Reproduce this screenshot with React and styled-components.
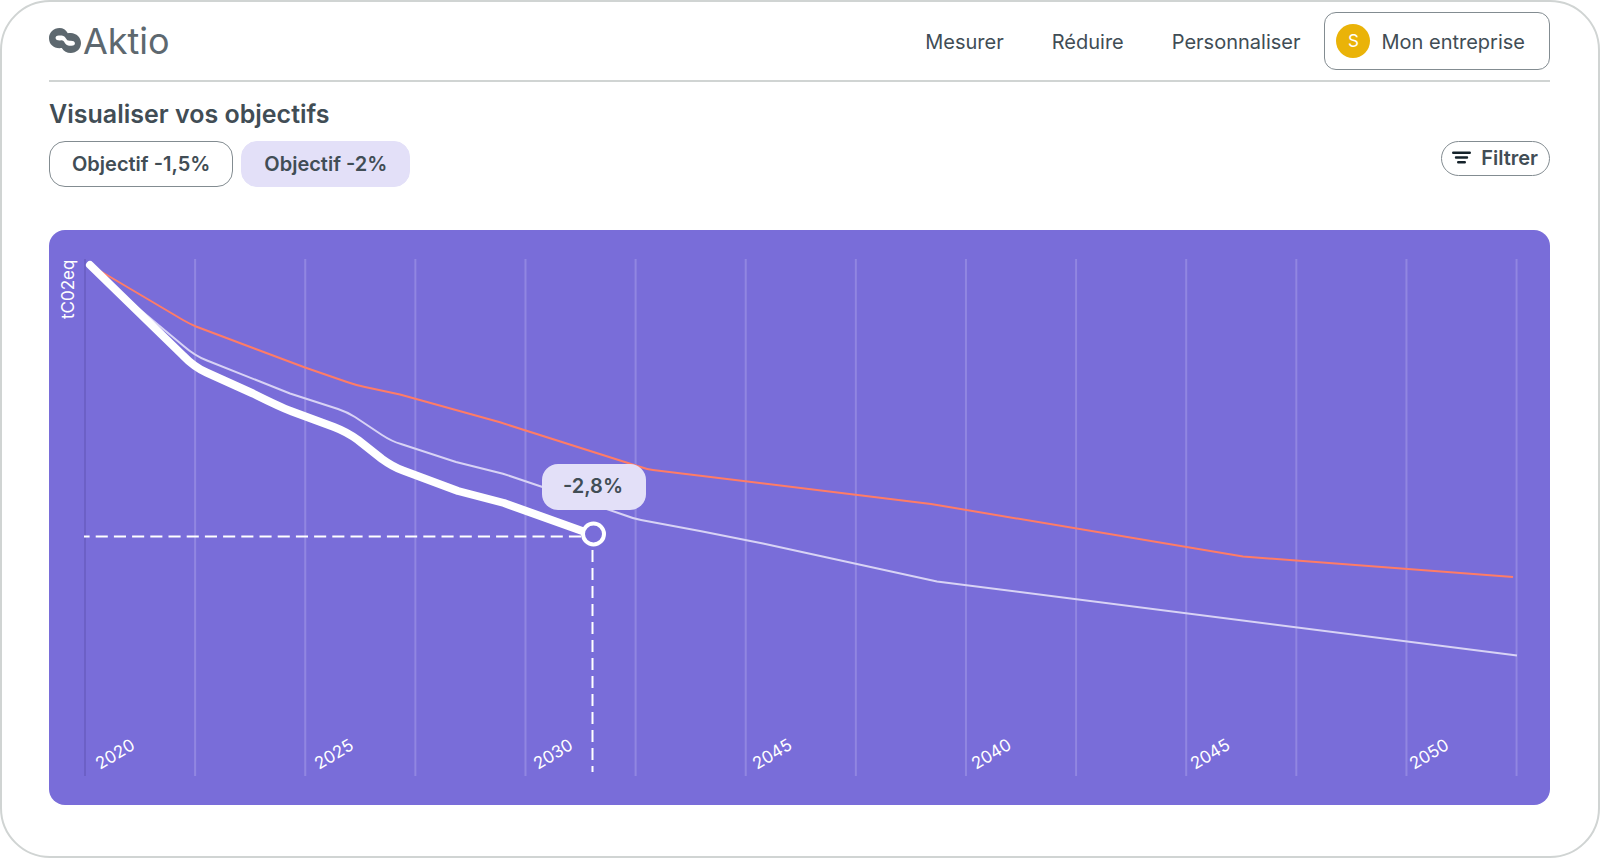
import React, { useState } from 'react';
import styled, { createGlobalStyle } from 'styled-components';

const GlobalStyle = createGlobalStyle`
  * {
    box-sizing: border-box;
  }

  body {
    margin: 0;
    background: #fff;
    color: #414d55;
    font-family: Inter, 'Liberation Sans', sans-serif;
  }

  button {
    font-family: inherit;
    color: inherit;
    cursor: pointer;
  }
`;

const Frame = styled.div`
  min-height: 100vh;
  padding: 10px 48px 51px 47px;
  border: 2px solid #d0d4d3;
  border-radius: 50px;
  background: #fff;
`;

const Header = styled.header`
  display: flex;
  align-items: center;
  justify-content: space-between;
  padding-bottom: 10px;
  border-bottom: 2px solid #d0d4d3;
`;

const Logo = styled.a`
  display: flex;
  align-items: center;
  gap: 2px;
  color: #5d686f;
  font-size: 36px;
  line-height: 42px;
  text-decoration: none;
`;

const Nav = styled.nav`
  display: flex;
  align-items: center;
  gap: 48px;
`;

const NavLink = styled.a`
  padding-top: 2px;
  font-size: 20px;
  line-height: 24px;
  color: inherit;
  text-decoration: none;
`;

const HeaderRight = styled.div`
  display: flex;
  align-items: center;
  gap: 24px;
`;

const CompanyButton = styled.button`
  display: flex;
  align-items: center;
  gap: 11px;
  height: 58px;
  padding: 0 24px 0 11px;
  border: 1px solid #838c91;
  border-radius: 12px;
  background: #fff;
  font-size: 20px;
  line-height: 24px;
`;

const CompanyName = styled.span`
  padding-top: 2px;
`;

const Avatar = styled.span`
  display: flex;
  align-items: center;
  justify-content: center;
  width: 34px;
  height: 34px;
  border-radius: 50%;
  background: #eab308;
  color: #fff;
  font-size: 17px;
`;

const Title = styled.h1`
  margin: 16px 0 10px;
  font-size: 25px;
  line-height: 33px;
  font-weight: 600;
`;

const Toolbar = styled.div`
  display: flex;
  align-items: flex-start;
  justify-content: space-between;
  margin-bottom: 43px;
`;

const Goals = styled.div`
  display: flex;
  gap: 8px;
`;

const GoalButton = styled.button`
  height: 46px;
  padding: 0 22px;
  border: 1px solid ${(props) => (props.$active ? '#e3e0f8' : '#838c91')};
  border-radius: 16px;
  background: ${(props) => (props.$active ? '#e3e0f8' : '#fff')};
  font-size: 20px;
  line-height: 24px;
  font-weight: 600;
`;

const FilterButton = styled.button`
  display: flex;
  align-items: center;
  gap: 10px;
  height: 35px;
  padding: 0 11px 2px 10px;
  border: 1px solid #838c91;
  border-radius: 18px;
  background: #fff;
  font-size: 20px;
  line-height: 24px;
  font-weight: 600;
`;

const ChartPanel = styled.section`
  overflow: hidden;
  border-radius: 16px;
  background: #796dd9;
`;

const Chart = styled.svg`
  display: block;
  width: 100%;
  height: auto;
`;

const AxisLabel = styled.text`
  fill: #fff;
  font-size: 17px;
`;

const BadgeText = styled.text`
  fill: #414d55;
  font-size: 20px;
  font-weight: 600;
`;

const goals = ['Objectif -1,5%', 'Objectif -2%'];
const years = ['2020', '2025', '2030', '2045', '2040', '2045', '2050'];
const gridLines = Array.from({ length: 14 }, (_, i) => 36 + i * 110.12);

function LogoMark() {
  return (
    <svg width="32" height="26" viewBox="0 0 32 26" aria-hidden="true">
      <path
        fill="#5d686f"
        fillRule="evenodd"
        d="M10.500 0C14 0 17 1.800 18.800 5.200C19.800 5 20.800 4.900 21.800 5C27.500 5.200 32 9.600 32 15C32 20.800 27.500 25 21.800 25C17.800 25 14.800 23.300 12.800 20C5 21 0 16.500 0 10.200C0 4.400 4.600 0 10.500 0ZM9.800 7.600C7.600 7.600 6.300 8.800 6.600 10.300C6.900 12 9 12.600 11.500 12.400C14.500 12.200 14.500 13.200 16 15.200C17.500 17.400 19.500 17.900 22.500 17.800C25 17.700 26.200 16.600 25.900 15C25.600 13.400 24 12.600 21.500 12.700C18.500 12.900 18 12 16.800 10.200C15.300 7.900 13.500 7.500 9.800 7.600Z"
      />
    </svg>
  );
}

function FilterIcon() {
  return (
    <svg width="19" height="13" viewBox="0 0 19 13" fill="none" stroke="#15222a" strokeWidth="2.4" strokeLinecap="round" aria-hidden="true">
      <path d="M1.200 1.700H17.800M4 6.500H15M6.200 11.300H12.800" />
    </svg>
  );
}

function ObjectiveChart() {
  return (
    <Chart viewBox="0 0 1501 575" role="img" aria-label="tC02eq">
      {gridLines.map((x, i) => (
        <line
          key={x}
          x1={x}
          x2={x}
          y1="29"
          y2="546"
          stroke={i === 0 ? '#6c60c6' : '#9186e1'}
          strokeWidth="2"
        />
      ))}

      <path
        d="M41 35L134 90Q141 94 147 96.500L256 137.500L298 152Q308 155.500 316 157L351 164.500L451 192.300L590 236.500Q597 239 604 240L882 274L1194 326.500L1464 347"
        fill="none"
        stroke="#ff7c66"
        strokeWidth="2"
      />
      <path
        d="M41 35L89 78L134 115.500Q146 126 158 130.500L241 163.500L289 179Q298 182 306 187L333 205Q343 211.500 352 214L407 232L454 243.700L492 256.500L578 286Q584 288.500 592 290L651 301L714 313.500L888 351.500L1468 425.500"
        fill="none"
        stroke="#d8d3f5"
        strokeWidth="2"
      />
      <path d="M532 306.500H35" stroke="#fff" strokeWidth="2" strokeDasharray="12.1 6.1" />
      <path d="M543.500 320V542" stroke="#fff" strokeWidth="2" strokeDasharray="12 6" />
      <path
        d="M41 35L134 125.500Q145 137 157.500 142.500L204 163.500Q230 176.500 243 181.500L285 197Q298 202 309 210L333 229Q344 237 354 240.500L409 261L455 273L536 302"
        fill="none"
        stroke="#fff"
        strokeWidth="8"
        strokeLinecap="round"
        strokeLinejoin="round"
      />
      <circle cx="544.500" cy="304" r="10.500" fill="#796dd9" stroke="#fff" strokeWidth="4" />

      <rect x="493" y="234" width="104" height="46" rx="16" fill="#e3e0f8" />
      <BadgeText x="544" y="263" textAnchor="middle">-2,8%</BadgeText>

      <AxisLabel transform="translate(25 89) rotate(-90)">tC02eq</AxisLabel>
      {years.map((year, i) => (
        <AxisLabel key={i} transform={`translate(${51 + i * 219} 540) rotate(-31)`}>
          {year}
        </AxisLabel>
      ))}
    </Chart>
  );
}

function App() {
  const [activeGoal, setActiveGoal] = useState(1);

  return (
    <Frame>
      <GlobalStyle />
      <Header>
        <Logo href="#">
          <LogoMark />
          Aktio
        </Logo>
        <HeaderRight>
          <Nav>
            <NavLink href="#mesurer">Mesurer</NavLink>
            <NavLink href="#reduire">Réduire</NavLink>
            <NavLink href="#personnaliser">Personnaliser</NavLink>
          </Nav>
          <CompanyButton type="button">
            <Avatar>S</Avatar>
            <CompanyName>Mon entreprise</CompanyName>
          </CompanyButton>
        </HeaderRight>
      </Header>

      <main>
        <Title>Visualiser vos objectifs</Title>
        <Toolbar>
          <Goals>
            {goals.map((goal, index) => (
              <GoalButton
                key={goal}
                type="button"
                $active={index === activeGoal}
                onClick={() => setActiveGoal(index)}
              >
                {goal}
              </GoalButton>
            ))}
          </Goals>
          <FilterButton type="button">
            <FilterIcon />
            Filtrer
          </FilterButton>
        </Toolbar>
        <ChartPanel>
          <ObjectiveChart />
        </ChartPanel>
      </main>
    </Frame>
  );
}

export default App;
